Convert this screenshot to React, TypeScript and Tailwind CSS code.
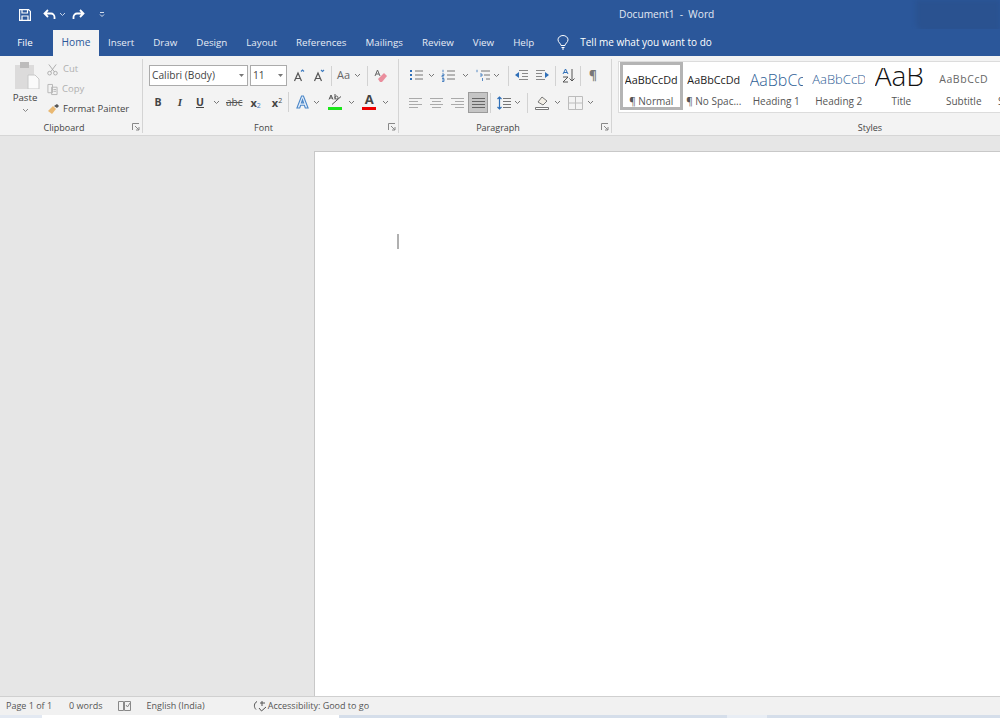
import type { ReactNode } from "react";

const font = { fontFamily: '"Open Sans", "Noto Sans", sans-serif' };

function Chev({ className = "text-[#777]" }: { className?: string }) {
  return (
    <svg width="7" height="5" viewBox="0 0 7 5" className={className}>
      <path d="M1 1l2.500 2.500L6 1" fill="none" stroke="currentColor" strokeWidth="1" />
    </svg>
  );
}

function Launcher() {
  return (
    <svg width="8" height="8" viewBox="0 0 8 8" className="text-[#888]">
      <path d="M.5 7V.5H7M3 3l4 4M7 4v3H4" fill="none" stroke="currentColor" strokeWidth="1" />
    </svg>
  );
}

function Sep({ h = "h-[20px]" }: { h?: string }) {
  return <div className={`w-px bg-[#d2d2d2] ${h}`} />;
}

function Group({ label, width, children }: { label: string; width: string; children: ReactNode }) {
  return (
    <div className={`relative mb-[2px] mt-[3px] flex shrink-0 flex-col border-r border-[#d4d4d4] ${width}`}>
      <div className="min-h-0 flex-1">{children}</div>
      <div className="h-[11px] pr-[14px] text-center text-[9px] leading-[11px] text-[#444]">{label}</div>
    </div>
  );
}

function Style({ sample, label, cls, selected }: { sample: string; label: string; cls: string; selected?: boolean }) {
  return (
    <div className={`flex h-[48px] w-[62.5px] shrink-0 flex-col items-center border-[3px] ${selected ? "border-[#b4b4b4]" : "border-transparent"}`}>
      <div className={`flex h-[30px] w-[53px] items-center justify-center overflow-hidden whitespace-nowrap ${cls}`}>{sample}</div>
      <div className="whitespace-nowrap text-[10px] leading-[12px] text-[#555]">{label}</div>
    </div>
  );
}

const tabs = ["Insert", "Draw", "Design", "Layout", "References", "Mailings", "Review", "View", "Help"];

const listLines = "M6 2h8M6 6h8M6 10h8";

export default function App() {
  return (
    <div className="flex h-[718px] w-[1000px] flex-col overflow-hidden bg-[#e6e6e6]" style={font}>
      {/* title bar */}
      <div className="relative flex h-[29px] shrink-0 items-center bg-[#2b579a] text-white">
        <div className="flex items-center pl-[19px]">
          <svg width="12" height="12" viewBox="0 0 12 12" fill="none" stroke="white" strokeWidth="1.200">
            <path d="M.6.600h9l1.800 1.800v9H.6zM3 .600v3.400h5.500V.600M3 11.400V7h6v4.400" />
          </svg>
          <svg width="13" height="11" viewBox="0 0 13 11" fill="none" stroke="white" strokeWidth="1.800" className="ml-[12px]">
            <path d="M5 1L1.500 4.500 5 8M2 4.500h6a3.500 3.500 0 0 1 3.500 3.500v2" />
          </svg>
          <Chev className="ml-[3px] text-[#c5d3e8]" />
          <svg width="13" height="11" viewBox="0 0 13 11" fill="none" stroke="white" strokeWidth="1.800" className="ml-[6px]">
            <path d="M8 1l3.500 3.500L8 8M11 4.500H5A3.500 3.500 0 0 0 1.500 8v2" />
          </svg>
          <svg width="6" height="7" viewBox="0 0 6 7" className="ml-[14px]" fill="none" stroke="#d5deec">
            <path d="M1 1.500h4M1 3.500l2 2 2-2" />
          </svg>
        </div>
        <div className="absolute left-[619px] top-[7px] whitespace-nowrap text-[10.2px] text-[#e3e9f3]">Document1&nbsp; -&nbsp; Word</div>
        <div className="absolute right-0 top-0 h-[32px] w-[84px] rounded-bl-[10px] bg-[#2a5290] blur-[2px]" />
      </div>

      {/* tabs */}
      <div className="relative flex h-[27px] shrink-0 items-end bg-[#2b579a] text-[9.75px] text-[#e6ecf5]">
        <div className="flex h-[27px] w-[53px] items-center justify-center pr-[3px] pt-[1px] text-white">File</div>
        <div className="flex h-[26px] w-[46px] items-center justify-center bg-[#f3f3f3] text-[10.2px] text-[#2b579a]">Home</div>
        <div className="flex h-[27px] items-center gap-[19px] pl-[9px] pt-[1px]">
          {tabs.map((t) => (
            <span key={t}>{t}</span>
          ))}
        </div>
        <div className="flex h-[27px] items-center pl-[23px] text-white">
          <svg width="12" height="15" viewBox="0 0 12 15" fill="none" stroke="white" strokeWidth="1">
            <path d="M4 10.500C4 8.500 1 7.500 1 4.800a5 4.300 0 0 1 10 0C11 7.500 8 8.500 8 10.500zM4.500 12.500h3M5 14h2" />
          </svg>
          <span className="ml-[11px] whitespace-nowrap text-[10px]">Tell me what you want to do</span>
        </div>
      </div>

      {/* ribbon */}
      <div className="flex h-[80px] shrink-0 border-b border-[#d6d6d6] bg-[#f3f3f3]">
        <Group label="Clipboard" width="w-[143px]">
          <div className="flex">
            <div className="flex w-[47px] flex-col items-center pl-[3px] pt-[3px]">
              <svg width="26" height="27" viewBox="0 0 26 27" className="ml-[4px]">
                <rect x="1" y="3" width="19" height="24" fill="#dcdbdb" />
                <rect x="6" y="0" width="9" height="6" fill="#bdbcbc" />
                <path d="M14 13h7l4 4v10H14z" fill="#fafafa" stroke="#c8c8c8" />
              </svg>
              <div className="mt-[2px] text-[9.7px] leading-[14px] text-[#444]">Paste</div>
              <Chev className="mt-[3px] text-[#888]" />
            </div>
            <div className="flex flex-col">
              <div className="flex h-[20px] items-center gap-[5px] text-[9.5px] text-[#b0b0b0]">
                <svg width="11" height="13" viewBox="0 0 12 13" fill="none" stroke="#a9a9a9" strokeWidth="1">
                  <path d="M2 1l6 8M10 1L4 9" />
                  <circle cx="2.800" cy="10.500" r="2" />
                  <circle cx="9.200" cy="10.500" r="2" />
                </svg>
                Cut
              </div>
              <div className="flex h-[20px] items-center gap-[4px] text-[9.5px] text-[#b0b0b0]">
                <svg width="11" height="13" viewBox="0 0 12 13" fill="none" stroke="#b5b5b5" strokeWidth="1">
                  <path d="M1 1h5v9H1zM5 4h6v8H5zM7 6.500h3M7 8.500h3" />
                </svg>
                Copy
              </div>
              <div className="flex h-[20px] items-center gap-[2px] whitespace-nowrap text-[9.5px] text-[#444]">
                <svg width="14" height="12" viewBox="0 0 14 12">
                  <path d="M1 8l5-5 3 3-4 5z" fill="#e9b872" />
                  <path d="M7 3l3-2 2 2-2 2z" fill="#555" />
                </svg>
                Format Painter
              </div>
            </div>
          </div>
          <div className="absolute bottom-[2px] right-[2px]"><Launcher /></div>
        </Group>

        <Group label="Font" width="w-[256px]">
          <div className="flex flex-col gap-[6px] pl-[6px] pt-[6px]">
            <div className="flex items-center">
              <div className="flex h-[21px] w-[99px] items-center justify-between border border-[#ababab] bg-white px-[2px] text-[10.2px] text-[#444]">
                Calibri (Body)
                <svg width="7" height="4" viewBox="0 0 7 4"><path d="M1 0h5L3.500 3z" fill="#777" /></svg>
              </div>
              <div className="ml-[2px] flex h-[21px] w-[37px] items-center justify-between border border-[#ababab] bg-white px-[2px] text-[10.2px] text-[#444]">
                11
                <svg width="7" height="4" viewBox="0 0 7 4"><path d="M1 0h5L3.500 3z" fill="#777" /></svg>
              </div>
              <div className="ml-[5px] flex w-[14px] flex-col items-center">
                <svg width="12" height="13" viewBox="0 0 12 13" fill="none" stroke="#555" strokeWidth="1.200">
                  <path d="M1.500 12L5 4l3.500 8M3 9.500h4" />
                  <path d="M8 2.500L9.500 1 11 2.500" stroke="#3f7cc0" />
                </svg>
              </div>
              <div className="ml-[6px] flex w-[14px] flex-col items-center">
                <svg width="12" height="13" viewBox="0 0 12 13" fill="none" stroke="#555" strokeWidth="1.200">
                  <path d="M1.500 12L5 4l3.500 8M3 9.500h4" />
                  <path d="M8 1l1.500 1.500L11 1" stroke="#3f7cc0" />
                </svg>
              </div>
              <div className="ml-[5px]"><Sep /></div>
              <span className="ml-[5px] text-[11px] text-[#666]">Aa</span>
              <span className="ml-[4px]"><Chev /></span>
              <div className="ml-[6px]"><Sep /></div>
              <svg width="14" height="14" viewBox="0 0 14 14" className="ml-[6px]">
                <path d="M6 13l-2-3 6-6 3 3-5 6z" fill="#ea8e9d" />
                <path d="M1 7l2.500-6L6 7M2 5h3" fill="none" stroke="#666" strokeWidth="1" />
              </svg>
            </div>
            <div className="flex h-[20px] items-center text-[#444]">
              <span className="ml-[3px] w-[12px] text-center text-[10.5px] font-bold leading-none">B</span>
              <span className="ml-[10px] w-[12px] text-center text-[11px] font-bold italic leading-none" style={{ fontFamily: '"Liberation Serif", serif' }}>I</span>
              <span className="ml-[8px] w-[12px] text-center text-[10.5px] font-bold leading-none underline">U</span>
              <span className="ml-[7px]"><Chev /></span>
              <span className="ml-[6px] text-[10px] leading-none text-[#555] line-through">abc</span>
              <span className="ml-[8px] text-[11px] font-bold leading-none">x<sub className="text-[7px] font-normal text-[#3f7cc0]">2</sub></span>
              <span className="ml-[11px] text-[11px] font-bold leading-none">x<sup className="text-[7px] font-normal">2</sup></span>
              <div className="ml-[6px]"><Sep /></div>
              <svg width="13" height="14" viewBox="0 0 14 15" className="ml-[7px]" fill="#e6effa" stroke="#4b87c8" strokeWidth="1.200">
                <path d="M1 14L6 1h2l5 13h-3l-1-3H5l-1 3zM5.800 8.500h2.400L7 5z" />
              </svg>
              <span className="ml-[4px]"><Chev /></span>
              <div className="ml-[8px] flex h-[19px] w-[14px] flex-col items-center justify-end pb-[2px]">
                <svg width="14" height="13" viewBox="0 0 14 13" fill="none" stroke="#555">
                  <path d="M1 6.500L3 2l2 4.500M1.800 5h2.400M7 1v5.500M7 4.500a1.500 1.500 0 1 1 0 .1M4 11.500l9-8" />
                </svg>
                <div className="mt-[1px] h-[3px] w-[14px] shrink-0 bg-[#19e619]" />
              </div>
              <span className="ml-[6px]"><Chev /></span>
              <div className="ml-[7px] flex h-[19px] w-[14px] flex-col items-center justify-end pb-[2px]">
                <span className="text-[13px] font-bold leading-[13px] text-[#444]">A</span>
                <div className="mt-[1px] h-[3px] w-[14px] shrink-0 bg-[#ee0000]" />
              </div>
              <span className="ml-[6px]"><Chev /></span>
            </div>
          </div>
          <div className="absolute bottom-[2px] right-[2px]"><Launcher /></div>
        </Group>

        <Group label="Paragraph" width="w-[213px]">
          <div className="flex flex-col gap-[6px] pl-[10px] pt-[6px]">
            <div className="flex h-[21px] items-center">
              <svg width="15" height="13" viewBox="0 0 15 13" fill="none" stroke="#777">
                <path d={listLines} />
                <path d="M1 2h2M1 6h2M1 10h2" stroke="#2f6fb8" strokeWidth="2" />
              </svg>
              <span className="ml-[4px]"><Chev /></span>
              <svg width="15" height="13" viewBox="0 0 15 13" fill="none" stroke="#777" className="ml-[6px]">
                <path d={listLines} />
                <path d="M2 .800v2.400M1 5h2v1.500H1V8h2M1 9.500h2v3H1M1 11h2" stroke="#2f6fb8" strokeWidth=".8" />
              </svg>
              <span className="ml-[6px]"><Chev /></span>
              <svg width="16" height="13" viewBox="0 0 16 13" fill="none" stroke="#777" className="ml-[6px]">
                <path d="M6 2h9M9 6h6M11 10h4" />
                <path d="M2 .800v2.400M5 5h2v2H5M7.500 9v3" stroke="#2f6fb8" strokeWidth=".8" />
              </svg>
              <span className="ml-[2px]"><Chev /></span>
              <div className="ml-[8px]"><Sep /></div>
              <svg width="14" height="13" viewBox="0 0 14 13" className="ml-[5px]" fill="none" stroke="#888">
                <path d="M5 1.500h9M8 4.500h6M8 7.500h6M5 10.500h9" />
                <path d="M1 6l4-3v6z" fill="#2f6fb8" stroke="none" />
              </svg>
              <svg width="14" height="13" viewBox="0 0 14 13" className="ml-[8px]" fill="none" stroke="#888">
                <path d="M0 1.500h9M0 4.500h6M0 7.500h6M0 10.500h9" />
                <path d="M13 6l-4-3v6z" fill="#2f6fb8" stroke="none" />
              </svg>
              <div className="ml-[5px]"><Sep /></div>
              <svg width="14" height="15" viewBox="0 0 14 15" className="ml-[6px]" fill="none" strokeWidth="1">
                <path d="M1 6l2.500-5L6 6M2 4.500h3" stroke="#2f6fb8" />
                <path d="M1 9h5l-5 5h5" stroke="#555" />
                <path d="M10 1v12M7.500 10.500L10 13l2.500-2.500" stroke="#555" />
              </svg>
              <div className="ml-[4px]"><Sep /></div>
              <span className="ml-[8px] text-[12px] font-bold leading-none text-[#777]">¶</span>
            </div>
            <div className="flex h-[21px] items-center">
              <svg width="13" height="10" viewBox="0 0 13 10" fill="none" stroke="#aaa"><path d="M0 .500h13M0 3.500h9M0 6.500h13M0 9.500h9" /></svg>
              <svg width="13" height="10" viewBox="0 0 13 10" fill="none" stroke="#aaa" className="ml-[8px]"><path d="M0 .500h13M2 3.500h9M0 6.500h13M2 9.500h9" /></svg>
              <svg width="13" height="10" viewBox="0 0 13 10" fill="none" stroke="#aaa" className="ml-[8px]"><path d="M0 .500h13M4 3.500h9M0 6.500h13M4 9.500h9" /></svg>
              <div className="ml-[4px] flex h-[21px] w-[20px] items-center justify-center border border-[#9b9b9b] bg-[#c5c5c5]">
                <svg width="13" height="10" viewBox="0 0 13 10" fill="none" stroke="#666"><path d="M0 .500h13M0 3.500h13M0 6.500h13M0 9.500h13" /></svg>
              </div>
              <div className="ml-[2px]"><Sep /></div>
              <svg width="14" height="14" viewBox="0 0 14 14" className="ml-[6px]" fill="none" stroke="#777">
                <path d="M6 2.500h8M6 5.500h8M6 8.500h8M6 11.500h8" />
                <path d="M2.500 1v12M.5 3l2-2 2 2M.5 11l2 2 2-2" stroke="#2f6fb8" strokeWidth="1.200" />
              </svg>
              <span className="ml-[3px]"><Chev /></span>
              <div className="ml-[6px]"><Sep /></div>
              <svg width="15" height="15" viewBox="0 0 15 15" className="ml-[7px]" fill="none" stroke="#777">
                <path d="M3 7l4-5 5 4-4 4z" fill="#f3efe6" />
                <path d="M.5 12.500h13v2H.5z" fill="#fff" />
              </svg>
              <span className="ml-[4px]"><Chev /></span>
              <svg width="15" height="14" viewBox="0 0 15 14" className="ml-[7px]" fill="none" stroke="#bcbcbc">
                <path d="M.5.500h14v13H.5zM7.500.500v13M.5 7h14" />
              </svg>
              <span className="ml-[4px]"><Chev /></span>
            </div>
          </div>
          <div className="absolute bottom-[2px] right-[2px]"><Launcher /></div>
        </Group>

        <div className="relative mb-[2px] mt-[3px] flex min-w-0 flex-1 flex-col pl-[6px]">
          <div className="mt-[2px] flex h-[52px] items-start overflow-hidden border border-r-0 border-[#dcdcdc] bg-white pl-[1px]">
            <Style selected sample="AaBbCcDd" label="¶ Normal" cls="text-[10.8px] text-[#222]" />
            <Style sample="AaBbCcDd" label="¶ No Spac..." cls="text-[10.8px] text-[#222]" />
            <Style sample="AaBbCc" label="Heading 1" cls="!justify-start text-[16px] font-light text-[#2e6096]" />
            <Style sample="AaBbCcD" label="Heading 2" cls="!justify-start text-[13px] font-light text-[#2e6096]" />
            <Style sample="AaB" label="Title" cls="!mb-[6px] !mt-[3px] !h-[21px] !items-start pr-[4px] text-[28px] font-light leading-[14px] text-[#111]" />
            <Style sample="AaBbCcD" label="Subtitle" cls="text-[10.5px] tracking-[0.6px] text-[#666]" />
            <div className="ml-[3px] mt-[33px] text-[10px] leading-[12px] text-[#555]">S</div>
          </div>
          <div className="mt-auto h-[11px] pl-[122px] text-center text-[9px] leading-[11px] text-[#444]">Styles</div>
        </div>
      </div>

      {/* document area */}
      <div className="flex min-h-0 flex-1 pl-[314px] pt-[15px]">
        <div className="flex-1 border-l border-t border-[#c8c8c8] bg-white pl-[82px] pt-[82px]">
          <div className="h-[15px] w-[2px] bg-[#b0b0b0]" />
        </div>
      </div>

      {/* status bar */}
      <div className="flex h-[19px] shrink-0 items-center border-t border-[#d0d0d0] bg-[#f1f1f1] pl-[6px] text-[9px] text-[#555]">
        <span>Page 1 of 1</span>
        <span className="ml-[17px]">0 words</span>
        <svg width="13" height="10" viewBox="0 0 13 10" fill="none" stroke="#888" className="ml-[16px]">
          <path d="M.5.500h5v9h-5zM6.500.500h6v9h-6zM8 4l1.500 2L12 2" />
        </svg>
        <span className="ml-[15px]">English (India)</span>
        <svg width="14" height="13" viewBox="0 0 14 13" fill="none" stroke="#555" className="ml-[48px]">
          <path d="M4 1.500C1 3 .5 7 3 9.500M7 3h5M9 1v5M6 8l2.500 3L13 7" />
        </svg>
        <span className="ml-[1px]">Accessibility: Good to go</span>
      </div>
      <div className="flex h-[3px] shrink-0 bg-[#d5deea]">
        <div className="h-full w-[42px] bg-[#e3e9f2]" />
        <div className="h-full w-[297px] bg-white" />
        <div className="ml-[388px] h-full w-[40px] bg-[#e8edf4]" />
      </div>
    </div>
  );
}
